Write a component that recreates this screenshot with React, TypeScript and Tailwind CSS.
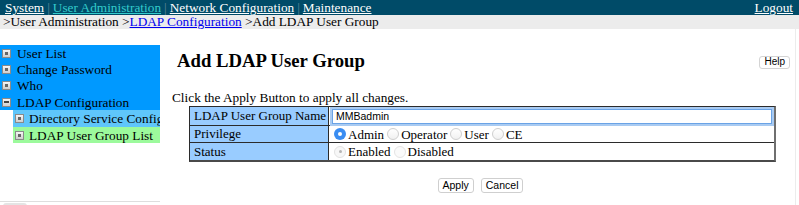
import React from "react";

const serif = "font-['Liberation_Serif','Times_New_Roman',serif]";
const sans = "font-['Liberation_Sans',Arial,sans-serif]";

function TreeIcon({ open }: { open?: boolean }) {
  return (
    <span className="inline-flex items-center justify-center w-[9px] h-[9px] border border-[#8a8a8a] bg-gradient-to-b from-[#f6f6f6] to-[#cfcfcf] shrink-0">
      {open ? (
        <span className="block w-[5px] h-[2px] bg-[#444]" />
      ) : (
        <span className="block w-[3px] h-[3px] bg-[#666]" />
      )}
    </span>
  );
}

function Radio({ state, label }: { state: "on" | "off" | "dim" | "faint"; label: string }) {
  return (
    <span className="inline-flex items-center mr-[3px] whitespace-nowrap">
      {state === "on" ? (
        <span className="w-[12px] h-[12px] rounded-full bg-[#3a8df2] flex items-center justify-center mr-[2px]">
          <span className="w-[4px] h-[4px] rounded-full bg-white" />
        </span>
      ) : state === "dim" ? (
        <span className="w-[12px] h-[12px] rounded-full border border-[#e2e2e2] bg-[#f7f7f7] flex items-center justify-center mr-[2px]">
          <span className="w-[3px] h-[3px] rounded-full bg-[#b5b5b5]" />
        </span>
      ) : state === "faint" ? (
        <span className="w-[12px] h-[12px] rounded-full border border-[#e4e4e4] bg-[#fafafa] mr-[2px]" />
      ) : (
        <span className="w-[12px] h-[12px] rounded-full border border-[#cfcfcf] bg-gradient-to-b from-white to-[#f1f1f1] mr-[2px]" />
      )}
      <span>{label}</span>
    </span>
  );
}

const menu = ["User List", "Change Password", "Who"];

export default function App() {
  return (
    <div className={`w-[799px] h-[205px] overflow-hidden bg-white text-black ${serif} text-[13.3px] leading-[15px]`}>
      {/* top navigation */}
      <div className="h-[15px] bg-[#004b68] flex items-center justify-between pl-[5px] pr-[6px]">
        <div className="flex text-white">
          <span className="underline">System</span>
          <span className="px-[3px] text-[#5f8797]">|</span>
          <span className="underline text-[#33cccc]">User Administration</span>
          <span className="px-[3px] text-[#5f8797]">|</span>
          <span className="underline">Network Configuration</span>
          <span className="px-[3px] text-[#5f8797]">|</span>
          <span className="underline">Maintenance</span>
        </div>
        <span className="underline text-white">Logout</span>
      </div>

      {/* breadcrumb */}
      <div className="h-[14px] bg-[#ececec] pl-[3px] leading-[14px]">
        &gt;User Administration &gt;<span className="underline text-[#0000ee]">LDAP Configuration</span> &gt;Add LDAP User Group
      </div>

      <div className="flex h-[176px]">
        {/* left menu */}
        <div className="w-[160px] flex flex-col pt-[16px]">
          <div className="bg-[#0099ff]">
            {menu.map((m) => (
              <div key={m} className="h-[16.3px] flex items-center pl-[2px] gap-[6px] whitespace-nowrap">
                <TreeIcon />
                <span>{m}</span>
              </div>
            ))}
            <div className="h-[16.3px] flex items-center pl-[2px] gap-[6px] whitespace-nowrap">
              <TreeIcon open />
              <span>LDAP Configuration</span>
            </div>
          </div>
          <div className="ml-[13px] h-[17px] bg-[#5fc6fb] flex items-center pl-[2px] gap-[5px] whitespace-nowrap overflow-hidden">
            <TreeIcon />
            <span>Directory Service Config</span>
          </div>
          <div className="ml-[13px] h-[16px] bg-[#9cfa9c] flex items-center pl-[2px] gap-[5px] whitespace-nowrap">
            <TreeIcon />
            <span>LDAP User Group List</span>
          </div>
          <div className="mt-auto h-[4px] border-t border-[#dedede] relative">
            <span className="absolute left-[3px] top-[1px] w-[24px] h-[3px] rounded-t-[3px] bg-[#e4e4e4]" />
          </div>
        </div>

        {/* main content */}
        <div className="w-[635px] flex flex-col">
          <div className="flex items-center justify-between mt-[21px] pl-[17px] pr-[5px] h-[22px]">
            <h1 className="font-bold text-[18.7px] leading-[22px]">Add LDAP User Group</h1>
            <button className={`${sans} text-[10px] leading-[10px] h-[13px] px-[4px] mt-[2px] border border-[#d4d4d4] rounded-[3px] bg-white`}>
              Help
            </button>
          </div>

          <div className="mt-[18px] pl-[12px]">Click the Apply Button to apply all changes.</div>

          <div className="ml-[29px] mt-[1px] w-[587px] text-[13px] border border-[#2b2b2b] border-r-2 border-b-2 border-r-[#6f6f6f] border-b-[#4a4a4a]">
            <div className="flex h-[19px] border-b border-[#2b2b2b]">
              <div className="w-[139px] bg-[#99ccff] border-r border-[#2b2b2b] pl-[4px] leading-[18px] whitespace-nowrap">LDAP User Group Name</div>
              <div className="flex-1 flex items-center pl-[3px] pr-[2px]">
                <div className={`${sans} w-full h-[15px] border border-[#6aa3e6] ring-2 ring-[#a9cbf2] bg-white text-[10.5px] leading-[13px] pl-[3px]`}>
                  MMBadmin
                </div>
              </div>
            </div>
            <div className="flex h-[17px] border-b border-[#2b2b2b]">
              <div className="w-[139px] bg-[#99ccff] border-r border-[#2b2b2b] pl-[4px] leading-[16px]">Privilege</div>
              <div className="flex-1 flex items-center pl-[5px]">
                <Radio state="on" label="Admin" />
                <Radio state="off" label="Operator" />
                <Radio state="off" label="User" />
                <Radio state="off" label="CE" />
              </div>
            </div>
            <div className="flex h-[17px]">
              <div className="w-[139px] bg-[#99ccff] border-r border-[#2b2b2b] pl-[4px] leading-[17px]">Status</div>
              <div className="flex-1 flex items-center pl-[5px]">
                <Radio state="dim" label="Enabled" />
                <Radio state="faint" label="Disabled" />
              </div>
            </div>
          </div>

          <div className={`flex justify-center gap-[7px] mt-[16px] pl-[6px] ${sans} text-[10.5px]`}>
            <button className="h-[15px] px-[4px] leading-[13px] border border-[#cfcfcf] rounded-[3px] bg-white">Apply</button>
            <button className="h-[15px] px-[4px] leading-[13px] border border-[#cfcfcf] rounded-[3px] bg-white">Cancel</button>
          </div>
        </div>

        <div className="w-[4px] border-l border-[#ececec]" />
      </div>
    </div>
  );
}
